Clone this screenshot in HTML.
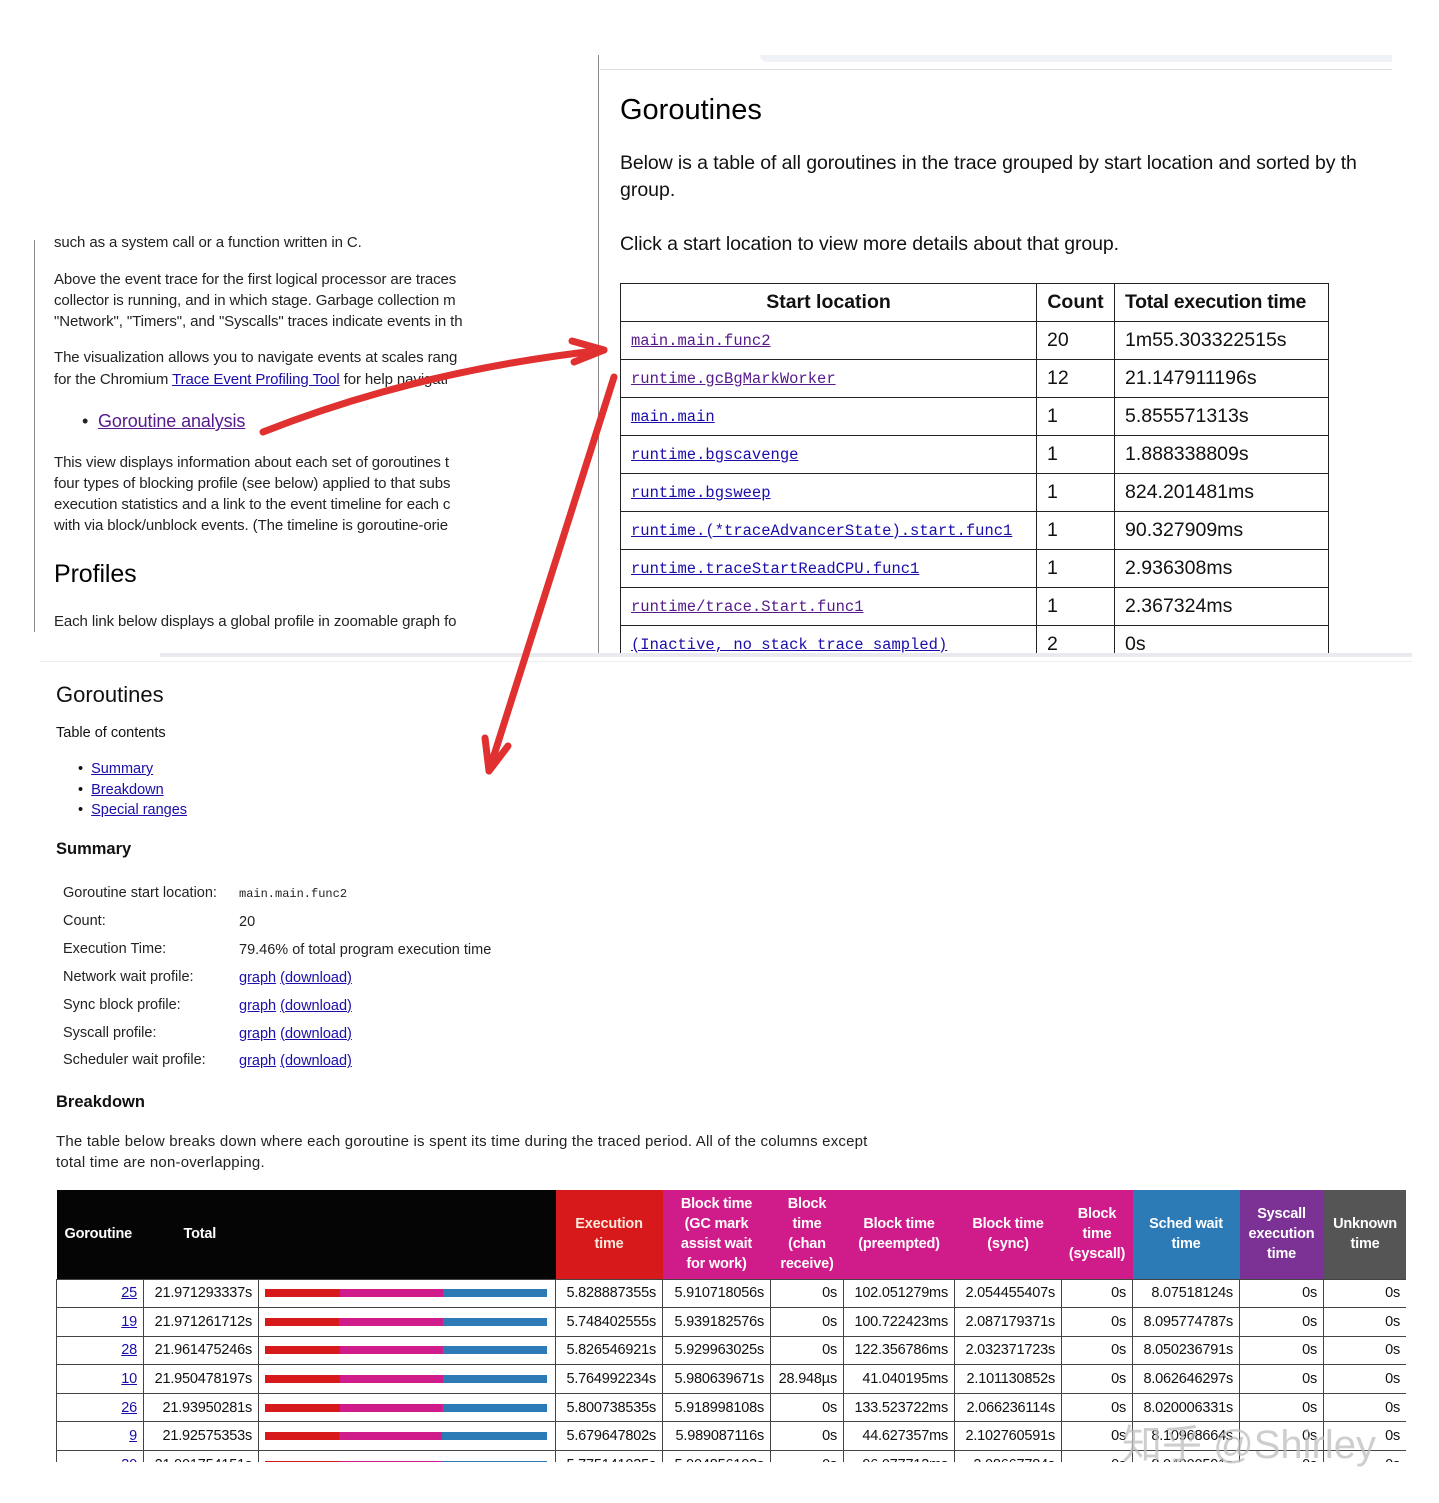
<!DOCTYPE html>
<html><head><meta charset="utf-8">
<style>
*{margin:0;padding:0;box-sizing:border-box}
body{width:1439px;height:1503px;background:#fff;position:relative;overflow:hidden;font-family:"Liberation Sans",sans-serif;color:#111}
.a{position:absolute;white-space:nowrap}
.lp{font-size:15px;letter-spacing:-0.1px;color:#222}
a{color:#1a0dab;text-decoration:underline}
.v{color:#551a8b}
.mono{font-family:"Liberation Mono",monospace}
table{border-collapse:collapse;position:absolute}
#t1 td,#t1 th{border:1.5px solid #222;height:38px;font-size:19.5px;padding:0 10px;font-weight:normal}
#t1 th{font-weight:bold}
#t1 td.m{font-family:"Liberation Mono",monospace;font-size:15.5px}
#t2 td,#t2 th{border:1px solid #444;font-size:14.5px;letter-spacing:-0.2px;padding:0 6px}
#t2 th{color:#fff;font-weight:bold;height:89px;border:none;line-height:20px}
#t2 td{height:28.6px;text-align:right}
.bar{display:flex;height:8px}
</style></head><body>

<!-- left panel -->
<div class="a" style="left:34px;top:240px;width:1px;height:392px;background:#888"></div>
<div style="position:absolute;left:54px;top:232px;width:426px;height:400px;overflow:hidden" class="lp">
<div class="a" style="top:2px">such as a system call or a function written in C.</div>
<div class="a" style="top:39px">Above the event trace for the first logical processor are traces</div>
<div class="a" style="top:60px">collector is running, and in which stage. Garbage collection m</div>
<div class="a" style="top:81px">"Network", "Timers", and "Syscalls" traces indicate events in th</div>
<div class="a" style="top:117px">The visualization allows you to navigate events at scales rang</div>
<div class="a" style="top:139px">for the Chromium <a href="#">Trace Event Profiling Tool</a> for help navigati</div>
<div class="a" style="top:179px;left:28px;font-size:18px">•&nbsp; <a href="#" class="v">Goroutine analysis</a></div>
<div class="a" style="top:222px">This view displays information about each set of goroutines t</div>
<div class="a" style="top:243px">four types of blocking profile (see below) applied to that subs</div>
<div class="a" style="top:264px">execution statistics and a link to the event timeline for each c</div>
<div class="a" style="top:285px">with via block/unblock events. (The timeline is goroutine-orie</div>
<div class="a" style="top:328px;font-size:25px;color:#000">Profiles</div>
<div class="a" style="top:381px">Each link below displays a global profile in zoomable graph fo</div>
</div>

<!-- right panel -->
<div class="a" style="left:598px;top:55px;width:1px;height:600px;background:#888"></div>
<div class="a" style="left:760px;top:55px;width:632px;height:7px;background:#eef1f6;border-radius:0 0 0 8px"></div>
<div class="a" style="left:600px;top:69px;width:792px;height:1px;background:#ddd"></div>
<div style="position:absolute;left:600px;top:70px;width:792px;height:584px;overflow:hidden">
<div class="a" style="left:20px;top:24px;font-size:29px;color:#000">Goroutines</div>
<div class="a" style="left:20px;top:82px;font-size:19.5px;letter-spacing:-0.1px">Below is a table of all goroutines in the trace grouped by start location and sorted by th</div>
<div class="a" style="left:20px;top:109px;font-size:19.5px">group.</div>
<div class="a" style="left:20px;top:163px;font-size:19.5px;letter-spacing:-0.1px">Click a start location to view more details about that group.</div>
<table id="t1" style="left:20px;top:213px;width:709px">
<tr><th style="width:416px">Start location</th><th style="width:78px">Count</th><th style="text-align:left;letter-spacing:-0.3px">Total execution time</th></tr>
<tr><td class="m"><a class="v">main.main.func2</a></td><td>20</td><td>1m55.303322515s</td></tr>
<tr><td class="m"><a class="v">runtime.gcBgMarkWorker</a></td><td>12</td><td>21.147911196s</td></tr>
<tr><td class="m"><a>main.main</a></td><td>1</td><td>5.855571313s</td></tr>
<tr><td class="m"><a>runtime.bgscavenge</a></td><td>1</td><td>1.888338809s</td></tr>
<tr><td class="m"><a>runtime.bgsweep</a></td><td>1</td><td>824.201481ms</td></tr>
<tr><td class="m"><a>runtime.(*traceAdvancerState).start.func1</a></td><td>1</td><td>90.327909ms</td></tr>
<tr><td class="m"><a>runtime.traceStartReadCPU.func1</a></td><td>1</td><td>2.936308ms</td></tr>
<tr><td class="m"><a class="v">runtime/trace.Start.func1</a></td><td>1</td><td>2.367324ms</td></tr>
<tr><td class="m"><a>(Inactive, no stack trace sampled)</a></td><td>2</td><td>0s</td></tr>
</table>
</div>
<div class="a" style="left:160px;top:653px;width:1252px;height:4px;background:#e8eaed"></div>
<div class="a" style="left:40px;top:661px;width:1372px;height:1px;background:#eee"></div>

<!-- bottom page -->
<div class="a" style="left:56px;top:682px;font-size:22px;color:#111">Goroutines</div>
<div class="a" style="left:56px;top:725px;font-size:14.5px">Table of contents</div>
<div class="a" style="left:78px;top:759px;font-size:14.5px;line-height:20.5px">•&nbsp; <a href="#">Summary</a><br>•&nbsp; <a href="#">Breakdown</a><br>•&nbsp; <a href="#">Special ranges</a></div>
<div class="a" style="left:56px;top:840px;font-size:16.5px;font-weight:bold">Summary</div>
<div class="a" style="left:63px;top:880px;font-size:14.5px;line-height:27.9px;color:#222">Goroutine start location:<br>Count:<br>Execution Time:<br>Network wait profile:<br>Sync block profile:<br>Syscall profile:<br>Scheduler wait profile:</div>
<div class="a" style="left:239px;top:880px;font-size:14.5px;line-height:27.9px;color:#222"><span class="mono" style="font-size:12px">main.main.func2</span><br>20<br>79.46% of total program execution time<br><a>graph</a> <a>(download)</a><br><a>graph</a> <a>(download)</a><br><a>graph</a> <a>(download)</a><br><a>graph</a> <a>(download)</a></div>
<div class="a" style="left:56px;top:1093px;font-size:16.5px;font-weight:bold">Breakdown</div>
<div class="a" style="left:56px;top:1131px;font-size:15px;line-height:21px;letter-spacing:0.2px;color:#222">The table below breaks down where each goroutine is spent its time during the traced period. All of the columns except<br>total time are non-overlapping.</div>

<div style="position:absolute;left:56px;top:1190px;width:1350px;height:272px;overflow:hidden">
<table id="t2" style="left:0;top:0;width:1350px;table-layout:fixed">
<colgroup><col style="width:87px"><col style="width:115px"><col style="width:297px"><col style="width:107px"><col style="width:108px"><col style="width:73px"><col style="width:111px"><col style="width:107px"><col style="width:71px"><col style="width:107px"><col style="width:84px"><col style="width:83px"></colgroup>
<tr>
<th style="background:#050505;text-align:left;padding-left:8px">Goroutine</th><th style="background:#050505;text-align:left;padding-left:40px">Total</th><th style="background:#050505"></th>
<th style="background:#d7191c;color:#fde8dc">Execution<br>time</th>
<th style="background:#d01c8b">Block time<br>(GC mark<br>assist wait<br>for work)</th>
<th style="background:#d01c8b">Block<br>time<br>(chan<br>receive)</th>
<th style="background:#d01c8b">Block time<br>(preempted)</th>
<th style="background:#d01c8b">Block time<br>(sync)</th>
<th style="background:#d01c8b">Block<br>time<br>(syscall)</th>
<th style="background:#2c7bb6">Sched wait<br>time</th>
<th style="background:#7b3294">Syscall<br>execution<br>time</th>
<th style="background:#555">Unknown<br>time</th>
</tr>
<tr><td><a>25</a></td><td>21.971293337s</td><td><div class="bar"><div style="width:75px;background:#d7191c"></div><div style="width:103px;background:#d01c8b"></div><div style="width:104px;background:#2c7bb6"></div></div></td><td>5.828887355s</td><td>5.910718056s</td><td>0s</td><td>102.051279ms</td><td>2.054455407s</td><td>0s</td><td>8.07518124s</td><td>0s</td><td>0s</td></tr>
<tr><td><a>19</a></td><td>21.971261712s</td><td><div class="bar"><div style="width:74px;background:#d7191c"></div><div style="width:104px;background:#d01c8b"></div><div style="width:104px;background:#2c7bb6"></div></div></td><td>5.748402555s</td><td>5.939182576s</td><td>0s</td><td>100.722423ms</td><td>2.087179371s</td><td>0s</td><td>8.095774787s</td><td>0s</td><td>0s</td></tr>
<tr><td><a>28</a></td><td>21.961475246s</td><td><div class="bar"><div style="width:75px;background:#d7191c"></div><div style="width:103px;background:#d01c8b"></div><div style="width:104px;background:#2c7bb6"></div></div></td><td>5.826546921s</td><td>5.929963025s</td><td>0s</td><td>122.356786ms</td><td>2.032371723s</td><td>0s</td><td>8.050236791s</td><td>0s</td><td>0s</td></tr>
<tr><td><a>10</a></td><td>21.950478197s</td><td><div class="bar"><div style="width:75px;background:#d7191c"></div><div style="width:103px;background:#d01c8b"></div><div style="width:104px;background:#2c7bb6"></div></div></td><td>5.764992234s</td><td>5.980639671s</td><td>28.948µs</td><td>41.040195ms</td><td>2.101130852s</td><td>0s</td><td>8.062646297s</td><td>0s</td><td>0s</td></tr>
<tr><td><a>26</a></td><td>21.93950281s</td><td><div class="bar"><div style="width:75px;background:#d7191c"></div><div style="width:103px;background:#d01c8b"></div><div style="width:104px;background:#2c7bb6"></div></div></td><td>5.800738535s</td><td>5.918998108s</td><td>0s</td><td>133.523722ms</td><td>2.066236114s</td><td>0s</td><td>8.020006331s</td><td>0s</td><td>0s</td></tr>
<tr><td><a>9</a></td><td>21.92575353s</td><td><div class="bar"><div style="width:74px;background:#d7191c"></div><div style="width:103px;background:#d01c8b"></div><div style="width:105px;background:#2c7bb6"></div></div></td><td>5.679647802s</td><td>5.989087116s</td><td>0s</td><td>44.627357ms</td><td>2.102760591s</td><td>0s</td><td>8.10968664s</td><td>0s</td><td>0s</td></tr>
<tr><td><a>30</a></td><td>21.901754151s</td><td><div class="bar"><div style="width:74px;background:#d7191c"></div><div style="width:103px;background:#d01c8b"></div><div style="width:105px;background:#2c7bb6"></div></div></td><td>5.775141035s</td><td>5.904856103s</td><td>0s</td><td>96.077713ms</td><td>2.08667784s</td><td>0s</td><td>8.04000591s</td><td>0s</td><td>0s</td></tr>
</table>
</div>

<!-- watermark -->
<div class="a" style="left:1122px;top:1412px;font-size:40px;color:rgba(190,190,190,0.75);font-family:'Liberation Sans','Noto Sans CJK SC',sans-serif">知乎 @Shirley</div>

<!-- arrows -->
<svg class="a" style="left:0;top:0" width="1439" height="1503">
<g fill="none" stroke="#e03030" stroke-width="7" stroke-linecap="round" stroke-linejoin="round">
<path d="M263 432 Q420 370 604 350"/>
<path d="M572 341 L604 350 L574 362"/>
<path d="M614 377 L489 771"/>
<path d="M485 738 L489 771 L508 746"/>
</g>
</svg>
</body></html>
